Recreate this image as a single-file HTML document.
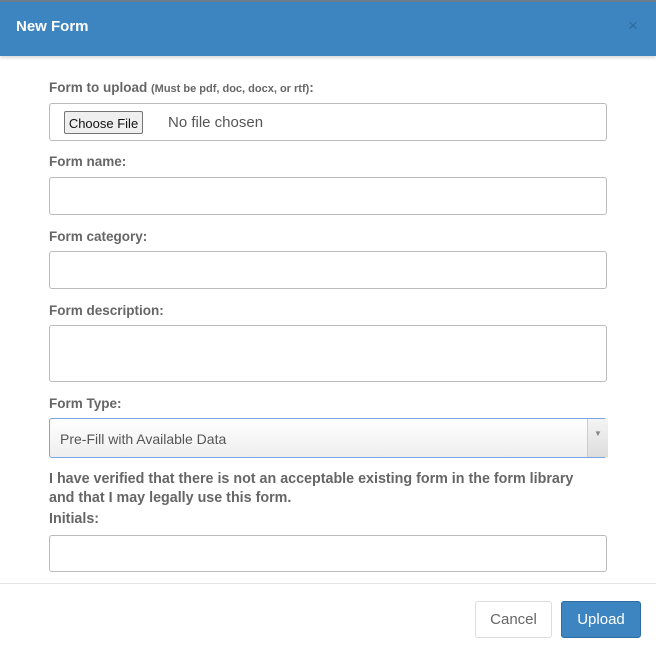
<!DOCTYPE html>
<html><head><style>
body{margin:0;width:656px;height:654px;background:#fff;font-family:"Liberation Sans",sans-serif;position:relative;overflow:hidden}
.a{position:absolute}
.hdr{left:0;top:0;width:656px;height:56px;background:#3d85c0;border-top:2px solid #6b7c8c;box-sizing:border-box;box-shadow:0 2px 3px rgba(0,0,0,.15)}
.lbl{left:49px;font-size:13.5px;font-weight:bold;color:#666}
.in{left:49px;width:558px;border:1px solid #bbb;border-radius:3px;box-sizing:border-box;background:#fff}
</style></head><body>
<div class="a hdr"></div>
<div class="a" style="left:16px;top:18px;color:#fff;font-weight:bold;font-size:15px">New Form</div>
<div class="a" style="left:628px;top:16px;color:#2c6a9e;font-size:17px">×</div>
<div class="a lbl" style="top:80px">Form to upload <span style="font-size:11px">(Must be pdf, doc, docx, or rtf)</span>:</div>
<div class="a in" style="top:103px;height:38px"></div>
<div class="a" style="left:64px;top:111px;height:23px;border:1px solid #767676;border-radius:2px;background:#efefef;font-size:13px;line-height:23px;text-align:center;color:#111;box-sizing:border-box;width:79px">Choose File</div>
<div class="a" style="left:168px;top:114px;font-size:15px;color:#555">No file chosen</div>
<div class="a lbl" style="top:154px">Form name:</div>
<div class="a in" style="top:177px;height:38px"></div>
<div class="a lbl" style="top:229px">Form category:</div>
<div class="a in" style="top:251px;height:38px"></div>
<div class="a lbl" style="top:303px">Form description:</div>
<div class="a in" style="top:325px;height:57px"></div>
<div class="a lbl" style="top:396px">Form Type:</div>
<div class="a in" style="top:418px;height:40px;border-color:#7aa3e8;background:linear-gradient(#fff,#eee)"></div>
<div class="a" style="left:587px;top:419px;width:20px;height:38px;border-left:1px solid #ccc;background:linear-gradient(#f4f4f4,#ddd);font-size:8px;color:#888;text-align:center;line-height:30px">▼</div>
<div class="a" style="left:60px;top:431px;font-size:14px;color:#555">Pre-Fill with Available Data</div>
<div class="a lbl" style="top:470px;line-height:19px;width:545px;font-size:14.3px">I have verified that there is not an acceptable existing form in the form library and that I may legally use this form.</div>
<div class="a lbl" style="top:511px;font-size:14.3px">Initials:</div>
<div class="a in" style="top:535px;height:37px"></div>
<div class="a" style="left:0;top:583px;width:656px;height:1px;background:#e5e5e5"></div>
<div class="a" style="left:475px;top:601px;width:77px;height:37px;border:1px solid #ddd;border-radius:3px;box-sizing:border-box;font-size:15px;color:#666;text-align:center;line-height:35px">Cancel</div>
<div class="a" style="left:561px;top:601px;width:80px;height:37px;border:1px solid #2e6da4;background:#3d85c0;border-radius:3px;box-sizing:border-box;font-size:15px;color:#fff;text-align:center;line-height:35px">Upload</div>
</body></html>
